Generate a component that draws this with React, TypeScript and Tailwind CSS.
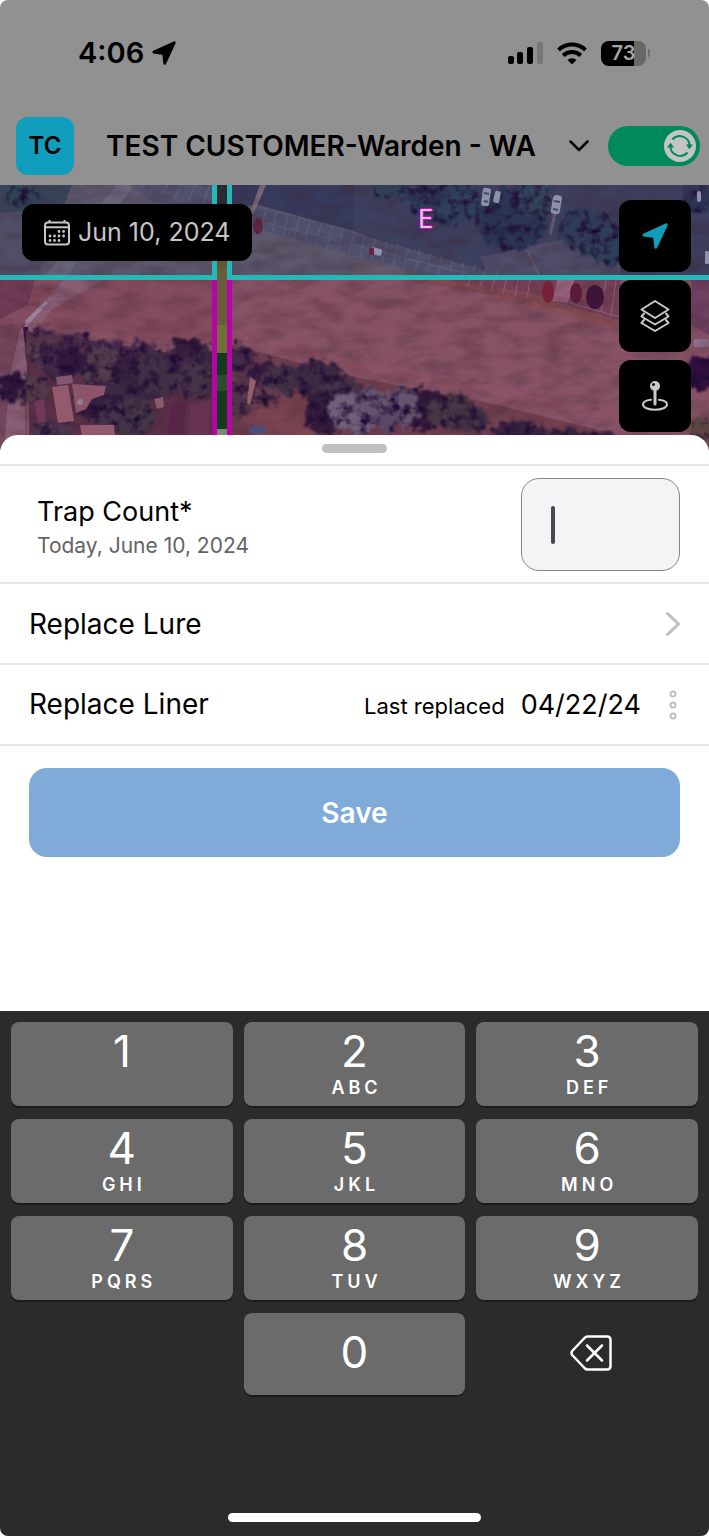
import { useState } from "react";

const KEYS = [
  { digit: "1", letters: "" },
  { digit: "2", letters: "ABC" },
  { digit: "3", letters: "DEF" },
  { digit: "4", letters: "GHI" },
  { digit: "5", letters: "JKL" },
  { digit: "6", letters: "MNO" },
  { digit: "7", letters: "PQRS" },
  { digit: "8", letters: "TUV" },
  { digit: "9", letters: "WXYZ" },
];

// Tree crowns on the aerial view: cx, cy, rx, ry, fill
const TREES: [number, number, number, number, string][] = [
  [25, 12, 20, 10, "#2f4155"],
  [448, 18, 38, 21, "#30405a"],
  [430, 10, 20, 12, "#2c3554"],
  [512, 34, 36, 31, "#2a3553"],
  [535, 14, 18, 18, "#32425a"],
  [588, 46, 28, 22, "#303b58"],
  [610, 60, 22, 20, "#2e4058"],
  [392, 6, 18, 8, "#303f56"],
  [700, 14, 18, 12, "#2e3454"],
  [44, 150, 14, 8, "#522f4b"],
  [76, 156, 18, 8, "#4b2c4a"],
  [104, 162, 20, 8, "#45284b"],
  [140, 164, 14, 7, "#48284b"],
  [42, 168, 16, 12, "#563b4b"],
  [62, 176, 22, 19, "#402946"],
  [100, 180, 24, 18, "#523c4a"],
  [72, 176, 15, 12, "#32183d"],
  [134, 192, 24, 24, "#371f3e"],
  [158, 190, 26, 24, "#412e45"],
  [190, 172, 24, 17, "#3e2743"],
  [186, 162, 16, 8, "#351d3b"],
  [196, 196, 24, 17, "#463347"],
  [32, 204, 17, 15, "#543a49"],
  [10, 202, 12, 15, "#2f163a"],
  [112, 216, 36, 20, "#3b2943"],
  [128, 232, 28, 18, "#443548"],
  [92, 220, 14, 14, "#35203d"],
  [52, 246, 22, 10, "#4b364c"],
  [240, 172, 14, 14, "#432a47"],
  [244, 210, 16, 22, "#523247"],
  [266, 188, 18, 12, "#381f3f"],
  [285, 196, 24, 16, "#433145"],
  [318, 194, 26, 18, "#3e2943"],
  [342, 206, 22, 14, "#463147"],
  [262, 212, 18, 11, "#633d4d"],
  [326, 228, 22, 22, "#341c3d"],
  [424, 224, 22, 21, "#32193c"],
  [450, 226, 24, 17, "#473643"],
  [470, 234, 18, 14, "#413044"],
  [520, 247, 28, 10, "#382240"],
  [580, 252, 34, 8, "#3b2641"],
  [700, 188, 18, 17, "#310f3c"],
  [702, 246, 12, 14, "#5b4542"],
];

// Silvery shrubs along the field edge
const SHRUBS: [number, number, number, number, string][] = [
  [346, 226, 16, 19, "#715f7a"],
  [372, 220, 17, 17, "#66536f"],
  [402, 222, 17, 19, "#66536d"],
  [386, 236, 14, 12, "#5a4666"],
  [360, 240, 14, 11, "#6d5c77"],
];

const STALLS = Array.from({ length: 23 }, (_, i) => i);

function AerialMap(): React.ReactElement {
  return (
    <svg
      viewBox="0 0 709 265"
      preserveAspectRatio="xMidYMid slice"
      className="absolute inset-0 h-full w-full"
      aria-hidden="true"
    >
      <defs>
        <filter id="rough" x="-5%" y="-5%" width="110%" height="110%" colorInterpolationFilters="sRGB">
          <feTurbulence type="fractalNoise" baseFrequency="0.12" numOctaves="3" seed="4" result="n" />
          <feDisplacementMap in="SourceGraphic" in2="n" scale="18" xChannelSelector="R" yChannelSelector="G" result="d" />
          <feGaussianBlur in="d" stdDeviation="1" />
        </filter>
        <filter id="leaves" x="-5%" y="-5%" width="110%" height="110%" colorInterpolationFilters="sRGB">
          <feTurbulence type="fractalNoise" baseFrequency="0.1" numOctaves="3" seed="12" />
          <feColorMatrix values="0 0 0 0 0.12  0 0 0 0 0.04  0 0 0 0 0.2  2.6 0 0 0 -1.15" result="n" />
          <feComposite in="n" in2="SourceAlpha" operator="in" result="shade" />
          <feMerge>
            <feMergeNode in="SourceGraphic" />
            <feMergeNode in="shade" />
          </feMerge>
        </filter>
        <filter id="grain" x="0" y="0" width="100%" height="100%" colorInterpolationFilters="sRGB">
          <feTurbulence type="fractalNoise" baseFrequency="0.035 0.08" numOctaves="4" seed="9" />
          <feColorMatrix values="0 0 0 0 0.24  0 0 0 0 0.13  0 0 0 0 0.18  1.2 0 0 0 -0.46" />
        </filter>
        <clipPath id="north">
          <rect width="709" height="92" />
        </clipPath>
        <clipPath id="south">
          <rect y="92" width="709" height="173" />
        </clipPath>
      </defs>

      {/* northern block, blue tint */}
      <g clipPath="url(#north)">
        <rect width="709" height="92" fill="#5c576c" />
        <path d="M0 0H72L38 92H0Z" fill="#504f67" />
        <path d="M0 0H72L62 24L0 28Z" fill="#38465a" />
        <path d="M116 0H134L66 92H44Z" fill="#6a647a" />
        <path d="M130 0H212V24L150 16Z" fill="#52526e" />
        <path d="M232 0H709V92H470L354 46L258 20L232 22Z" fill="#373a5c" />
        <path d="M354 0H709V92H480L354 46Z" fill="#3d3f5f" />
        <path d="M250 20L354 48L480 84L500 92H440L354 70L250 42Z" fill="#4e506e" />
        <path d="M354 74L430 92H354Z" fill="#655a6a" />
        <path d="M480 72L560 55L620 80V92H490Z" fill="#4f4d6a" />
        <path d="M260 0H266L253 30H249Z" fill="#786777" />
        <path d="M545 0L556 24L550 50" stroke="#625870" strokeWidth="3" fill="none" />
        <path d="M527 65L540 92" stroke="#6a5b6c" strokeWidth="2" />
        <g stroke="#737394" strokeWidth="1" opacity="0.45">
          {STALLS.map((i) => (
            <path key={i} d={`M${266 + i * 11} ${23 + i * 3}l-5 22`} />
          ))}
          <path d="M255 35L480 92" fill="none" />
        </g>
        <g stroke="#7a7891" strokeWidth="1" opacity="0.5">
          <path d="M140 4l8 -8M150 8l8 -12M162 10l8 -14M174 14l8 -16M188 17l8 -18M202 20l8 -20" />
        </g>
        <ellipse cx="258" cy="41" rx="5" ry="8" fill="#5d2541" />
      </g>

      {/* southern block, magenta tint */}
      <g clipPath="url(#south)">
        <rect y="92" width="709" height="173" fill="#875266" />
        <path d="M0 92H212V160L90 146L30 140L0 150Z" fill="#844c5f" />
        <path d="M0 92H36L28 120L0 134Z" fill="#703b55" />
        <path d="M0 140L30 138L26 265H0Z" fill="#76465d" />
        <path d="M66 92H108L52 124L36 146L24 200L26 265H4L10 190L20 146Z" fill="#875d73" />
        <path d="M48 118L26 142L25 136L45 116Z" fill="#99829a" />
        <path d="M23 142H28L32 190H28Z" fill="#35173d" />
        <path d="M26 146L212 174V265H30Z" fill="#5a3048" />
        <path d="M232 160L354 192L480 216L619 250V265H232Z" fill="#703f50" />
        <path d="M232 152L360 186L490 210L709 258V250L490 200L360 178L232 144Z" fill="#8f5464" opacity="0.6" />
        <path d="M260 206L330 212V265H250Z" fill="#7c4451" />
        <path d="M384 92L530 116L620 140V92Z" fill="#744058" />
        <path d="M384 92L480 108L619 144V136L530 108L430 92Z" fill="#884d51" opacity="0.7" />
        <g stroke="#9b6c86" strokeWidth="1" opacity="0.7">
          <path d="M470 95l-3 7M482 95l-3 9M494 95l-3 12M506 95l-3 14M518 95l-3 16M530 95l-3 18M606 95l-5 32M616 95l-5 36M570 118L620 132" />
        </g>
        <path d="M558 92H575L568 118L552 116Z" fill="#99657d" />
        <ellipse cx="548" cy="107" rx="6" ry="11" fill="#7e213b" />
        <ellipse cx="576" cy="108" rx="6" ry="10" fill="#5c1b3b" />
        <ellipse cx="595" cy="112" rx="9" ry="12" fill="#3f1239" />
        <path d="M691 92H709V150L691 140Z" fill="#704062" />
        <rect x="694" y="154" width="15" height="8" rx="2" fill="#8f7490" />
      </g>

      <rect width="709" height="265" filter="url(#grain)" opacity="0.6" />

      <g filter="url(#leaves)">
        <g filter="url(#rough)">
          {TREES.map(([cx, cy, rx, ry, fill], i) => (
            <ellipse key={i} cx={cx} cy={cy} rx={rx} ry={ry} fill={fill} />
          ))}
        </g>
      </g>
      <g filter="url(#leaves)">
        <g filter="url(#rough)">
          {SHRUBS.map(([cx, cy, rx, ry, fill], i) => (
            <ellipse key={i} cx={cx} cy={cy} rx={rx} ry={ry} fill={fill} />
          ))}
        </g>
      </g>

      {/* roofs, sheds and parked cars */}
      <path d="M52 202L68 200L74 236L58 238Z" fill="#925a6c" />
      <path d="M72 199L106 201L104 210L92 214L86 224L76 228Z" fill="#8b5468" />
      <path d="M56 192L72 190L73 198L57 200Z" fill="#845673" />
      <path d="M80 240L114 240L116 265H84Z" fill="#925a6c" />
      <path d="M34 216L44 214L46 236L38 238Z" fill="#70395a" />
      <path d="M172 218L186 216L184 254L166 256Z" fill="#572545" />
      <path d="M190 220L210 216V250L188 252Z" fill="#673151" />
      <path d="M154 214L163 212L164 222L157 224Z" fill="#8a5a6c" />
      <path d="M250 192L256 196L250 220L247 218Z" fill="#93606c" />
      <circle cx="80" cy="217" r="3" fill="#9b7891" />
      <rect x="249" y="242" width="16" height="6" fill="#424f82" />
      <g fill="#8e90aa">
        <rect x="482" y="3" width="8" height="18" rx="2" transform="rotate(8 486 12)" />
        <rect x="494" y="6" width="6" height="12" rx="2" transform="rotate(12 497 12)" />
        <rect x="552" y="10" width="9" height="19" rx="3" transform="rotate(10 556 19)" />
        <rect x="697" y="6" width="4" height="11" rx="2" />
        <rect x="705" y="66" width="4" height="13" rx="1" />
        <rect x="371" y="63" width="11" height="7" rx="2" transform="rotate(12 376 66)" />
      </g>
      <path d="M484 8l5 1M484 16l4 1M554 16l6 1M553 24l5 1" stroke="#444766" strokeWidth="2" />
      <rect x="369" y="63" width="5" height="7" fill="#63263f" />

      {/* untinted lane between the blocks */}
      <rect x="217" width="10" height="22" fill="#2c2a2e" />
      <rect x="217" y="22" width="10" height="62" fill="#615832" />
      <rect x="217" y="84" width="10" height="56" fill="#6a5b3b" />
      <rect x="217" y="140" width="10" height="28" fill="#6f7038" />
      <rect x="217" y="168" width="10" height="76" fill="#123c1c" />
      <rect x="217" y="190" width="10" height="16" fill="#2a4d2c" />
      <rect x="217" y="244" width="10" height="21" fill="#798870" />
      <g strokeWidth="5" fill="none">
        <path d="M214.5 95V265M229.5 95V265" stroke="#b703a8" />
        <path d="M0 92.5H214.5V0M709 92.5H229.5V0" stroke="#21bab8" />
      </g>
    </svg>
  );
}

function LocationArrow({ className }: { className: string }): React.ReactElement {
  return (
    <svg
      viewBox="0 0 26 26"
      className={className}
      fill="currentColor"
      stroke="currentColor"
      strokeWidth="3"
      strokeLinejoin="round"
      aria-hidden="true"
    >
      <path d="M2 12L24.200 1.800L13.800 24.200L12.600 13.600Z" />
    </svg>
  );
}

function StatusBar(): React.ReactElement {
  return (
    <div className="flex h-[106px] items-center justify-between pr-[59px] pl-[78px]">
      <div className="flex items-center gap-2">
        <span className="text-[29px] font-semibold">4:06</span>
        <LocationArrow className="h-6 w-6" />
      </div>
      <div className="flex items-center gap-[13px]">
        <svg width="36" height="23" viewBox="0 0 36 23" aria-hidden="true">
          <rect x="1" y="14" width="6" height="8" rx="2" />
          <rect x="10" y="10" width="6" height="12" rx="2" />
          <rect x="20" y="5" width="6" height="17" rx="2" />
          <rect x="30" y="0" width="6" height="22" rx="2" fill="#777" />
        </svg>
        <svg width="32" height="23" viewBox="0 0 32 23" fill="none" aria-hidden="true">
          <path d="M2.500 8A19.500 19.500 0 0 1 29.500 8" stroke="#000" strokeWidth="4" />
          <path d="M7.200 13.500A12.500 12.500 0 0 1 24.800 13.500" stroke="#000" strokeWidth="4" />
          <path d="M11.500 18A7 7 0 0 1 20.500 18L17 21.500Q16 22.500 15 21.500Z" fill="#000" />
        </svg>
        <div className="flex items-center gap-0.5">
          <div className="relative flex h-[25px] w-[45px] items-center justify-center overflow-hidden rounded-lg bg-[#686868]">
            <div className="absolute inset-y-0 left-0 w-[73%] bg-black" />
            <span className="relative text-xl font-semibold text-[#a6a6a6]">73</span>
          </div>
          <div className="h-2 w-0.5 rounded-r bg-[#6c6c6c]" />
        </div>
      </div>
    </div>
  );
}

function SyncIcon(): React.ReactElement {
  return (
    <svg viewBox="0 0 26 26" className="h-[26px] w-[26px]" fill="none" stroke="#00895b" strokeWidth="2" aria-hidden="true">
      <path d="M5.500 6.500A9.800 9.800 0 0 1 22.600 12" />
      <path d="M20.500 19.500A9.800 9.800 0 0 1 3.400 14" />
      <path d="M18.800 11.500H26L22.400 16.200Z" fill="#00895b" stroke="none" />
      <path d="M0 14.500H7.200L3.600 9.800Z" fill="#00895b" stroke="none" />
    </svg>
  );
}

function CalendarIcon(): React.ReactElement {
  return (
    <svg width="26" height="26" viewBox="0 0 26 26" fill="none" stroke="#c6c6c6" strokeWidth="2" aria-hidden="true">
      <rect x="1" y="2.500" width="24" height="22" rx="3" />
      <path d="M1 7.200H25" />
      <path d="M5.500 0V3M20.500 0V3" />
      <path
        d="M15 11.500h0M19.600 11.500h0M6 16h0M10.500 16h0M15 16h0M19.600 16h0M6 20.500h0M10.500 20.500h0M15 20.500h0"
        strokeWidth="2.800"
        strokeLinecap="round"
      />
    </svg>
  );
}

function LayersIcon(): React.ReactElement {
  return (
    <svg width="30" height="32" viewBox="0 0 30 32" fill="none" stroke="#c9c9c9" strokeWidth="2" strokeLinejoin="round" strokeLinecap="round" aria-hidden="true">
      <path d="M15 1L28.500 9.500L15 18L1.500 9.500Z" />
      <path d="M4 13.500L1.500 16.500L15 24.500L28.500 16.500L26 13.500" />
      <path d="M4 20L1.500 23L15 31L28.500 23L26 20" />
    </svg>
  );
}

function PinIcon(): React.ReactElement {
  return (
    <svg width="26" height="30" viewBox="0 0 26 30" fill="none" stroke="#c9c9c9" strokeWidth="2" strokeLinecap="round" aria-hidden="true">
      <circle cx="13" cy="5" r="5" fill="#c9c9c9" stroke="none" />
      <circle cx="11.500" cy="3.500" r="1.500" fill="#111" stroke="none" />
      <path d="M13 9V23" strokeWidth="3" />
      <path d="M9 18.800C4.500 19.300 1 21.200 1 23.500C1 26.500 6.200 28.800 13 28.800S25 26.500 25 23.500C25 21.200 21.500 19.300 17 18.800" />
    </svg>
  );
}

function MapButton({
  label,
  children,
}: {
  label: string;
  children: React.ReactNode;
}): React.ReactElement {
  return (
    <button
      type="button"
      aria-label={label}
      className="flex h-[72px] w-[72px] items-center justify-center rounded-xl bg-black"
    >
      {children}
    </button>
  );
}

export default function App(): React.ReactElement {
  const [count, setCount] = useState("");
  const [online, setOnline] = useState(true);

  return (
    <div className="flex min-h-screen flex-col overflow-hidden rounded-lg bg-white font-['Inter',sans-serif] text-black">
      <header className="bg-[#919191]">
        <StatusBar />
        <div className="flex h-[79px] items-center pr-[9px] pl-4">
          <div className="flex h-[58px] w-[58px] items-center justify-center rounded-xl bg-[#119dbc] text-2xl font-semibold">
            TC
          </div>
          <button
            type="button"
            className="ml-8 flex flex-1 items-center justify-between text-[28px] font-semibold whitespace-nowrap"
          >
            TEST CUSTOMER-Warden - WA
            <svg width="20" height="12" viewBox="0 0 20 12" fill="none" stroke="#000" strokeWidth="2.500" strokeLinecap="round" strokeLinejoin="round" aria-hidden="true">
              <path d="M1.500 1.500L10 10L18.500 1.500" />
            </svg>
          </button>
          <label className="ml-[19px] flex h-10 w-[92px] items-center justify-end rounded-full bg-[#00895b] pr-1">
            <input
              type="checkbox"
              role="switch"
              aria-label="Sync"
              checked={online}
              onChange={(e) => setOnline(e.target.checked)}
              className="sr-only"
            />
            <span className="flex h-8 w-8 items-center justify-center rounded-full bg-[#c4c4c4]">
              <SyncIcon />
            </span>
          </label>
        </div>
      </header>

      <section className="relative h-[265px] overflow-hidden bg-[#7d485c]">
        <AerialMap />
        <button
          type="button"
          className="absolute top-[19px] left-[22px] flex h-[57px] items-center gap-2 rounded-xl bg-black px-[22px] text-[25px] text-[#c6c6c6]"
        >
          <CalendarIcon />
          Jun 10, 2024
        </button>
        <span className="absolute top-4 left-[59%] text-[25px] text-[#d8ced8] [text-shadow:1px_0_#d400c8,-1px_0_#d400c8,0_1px_#d400c8,0_-1px_#d400c8]">
          E
        </span>
        <div className="absolute top-[15px] right-[18px] flex flex-col gap-2">
          <MapButton label="My location">
            <LocationArrow className="h-[26px] w-[26px] text-[#119dbc]" />
          </MapButton>
          <MapButton label="Layers">
            <LayersIcon />
          </MapButton>
          <MapButton label="Drop pin">
            <PinIcon />
          </MapButton>
        </div>
      </section>

      {/* Bottom sheet */}
      <main className="relative -mt-[15px] flex flex-1 flex-col rounded-t-[18px] bg-white">
        <div className="flex justify-center pt-[9px] pb-[11px]">
          <div className="h-[9px] w-[65px] rounded-full bg-[#c0c0bf]" />
        </div>
        <div className="flex h-[118px] items-center justify-between border-t-2 border-[#e5e5ea] pr-[29px] pl-[37px]">
          <div className="pt-2">
            <label htmlFor="trap-count" className="block text-[27px] leading-9">
              Trap Count*
            </label>
            <p className="text-[21px] leading-8 text-[#636366]">Today, June 10, 2024</p>
          </div>
          <div className="relative">
            <input
              id="trap-count"
              inputMode="numeric"
              value={count}
              onChange={(e) => setCount(e.target.value)}
              className="block h-[93px] w-[159px] rounded-[18px] border border-[#85858a] bg-[#f4f4f7] px-[30px] text-[27px] outline-none"
            />
            <span className="absolute top-7 left-[30px] h-[38px] w-1 rounded-full bg-[#48484d]" />
          </div>
        </div>
        <button
          type="button"
          className="flex h-[81px] items-center justify-between border-t-2 border-[#e5e5ea] px-[29px] text-[28px]"
        >
          Replace Lure
          <svg width="14" height="24" viewBox="0 0 14 24" fill="none" stroke="#bfbfbf" strokeWidth="3" strokeLinecap="round" strokeLinejoin="round" aria-hidden="true">
            <path d="M1.500 1.500L12.500 12L1.500 22.500" />
          </svg>
        </button>
        <div className="flex h-[83px] items-center border-y-2 border-[#e5e5ea] px-[29px]">
          <div className="flex flex-1 items-baseline gap-4">
            <span className="flex-1 text-[28px]">Replace Liner</span>
            <span className="text-[22px]">Last replaced</span>
            <span className="text-[27px]">04/22/24</span>
          </div>
          <button type="button" aria-label="More" className="ml-[25px]">
            <svg width="14" height="30" viewBox="0 0 14 30" fill="none" stroke="#bfbfbf" strokeWidth="2" aria-hidden="true">
              <circle cx="7" cy="4" r="2.500" />
              <circle cx="7" cy="15" r="2.500" />
              <circle cx="7" cy="26" r="2.500" />
            </svg>
          </button>
        </div>
        <div className="px-[29px] py-[22px]">
          <button
            type="button"
            className="h-[89px] w-full rounded-[18px] bg-[#80aad8] text-[28px] font-semibold text-white"
          >
            Save
          </button>
        </div>
      </main>

      {/* Number pad */}
      <section className="bg-[#2b2b2b] px-[11px] pt-[11px] pb-[14px]">
        <div className="grid grid-cols-3 gap-x-[11px] gap-y-[13px]">
          {KEYS.map(({ digit, letters }) => (
            <button
              key={digit}
              type="button"
              onClick={() => setCount(count + digit)}
              className="flex h-[84px] flex-col items-center rounded-lg bg-[#6b6b6b] pt-2 text-white shadow-[0_2px_0_#1c1c1c]"
            >
              <span className="text-[44px] leading-[42px]">{digit}</span>
              <span className="pt-1 pl-1 text-lg leading-6 font-semibold tracking-[4px]">{letters}</span>
            </button>
          ))}
          <button
            type="button"
            onClick={() => setCount(count + "0")}
            className="col-start-2 h-[82px] rounded-lg bg-[#6b6b6b] pb-1 text-[44px] leading-[42px] text-white shadow-[0_2px_0_#1c1c1c]"
          >
            0
          </button>
          <button
            type="button"
            aria-label="Delete"
            onClick={() => setCount(count.slice(0, -1))}
            className="flex h-[80px] items-center justify-center"
          >
            <svg width="42" height="36" viewBox="0 0 42 36" fill="none" stroke="#fff" strokeWidth="2.500" strokeLinecap="round" strokeLinejoin="round" className="ml-2" aria-hidden="true">
              <path d="M17.500 1.500H37Q40.500 1.500 40.500 5V31Q40.500 34.500 37 34.500H17.500Q16 34.500 14.500 33L2.200 20Q0.800 18 2.200 16L14.500 3Q16 1.500 17.500 1.500Z" />
              <path d="M17 10.500L32 25.500M32 10.500L17 25.500" />
            </svg>
          </button>
        </div>
        <div className="mx-auto mt-[118px] h-[9px] w-[253px] rounded-full bg-white" />
      </section>
    </div>
  );
}
